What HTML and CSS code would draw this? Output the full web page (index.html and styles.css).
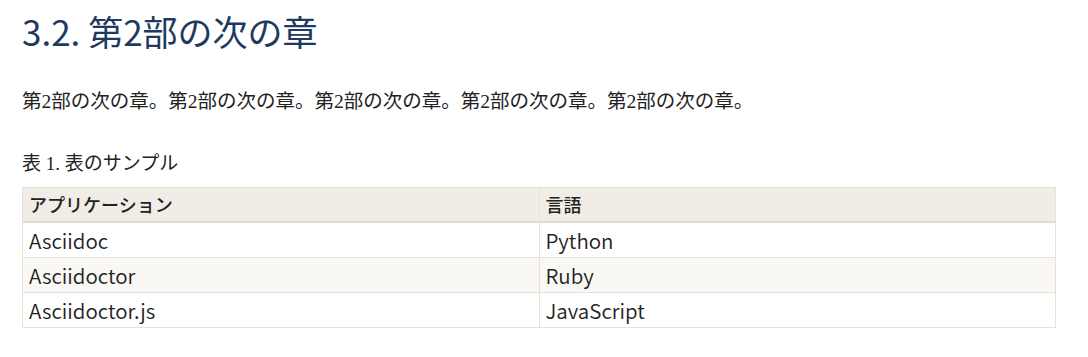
FILE: index.html
```html
<!DOCTYPE html>
<html lang="ja">
<head>
    <meta charset="UTF-8">
    <meta name="viewport" content="width=device-width, initial-scale=1.0">
    <title>第2部の次の章</title>
    <link rel="stylesheet" href="styles.css">
</head>
<body>

    <!-- Section 3.2 -->
    <div class="sect2">
        <h3 id="_chapter_next">3.2. 第2部の次の章</h3>
        <div class="paragraph">
            <p>第2部の次の章。第2部の次の章。第2部の次の章。第2部の次の章。第2部の次の章。</p>
        </div>

        <table class="tableblock">
            <caption class="title">表 1. 表のサンプル</caption>
            <colgroup>
                <col style="width: 50%;">
                <col style="width: 50%;">
            </colgroup>
            <thead>
                <tr>
                    <th>アプリケーション</th>
                    <th>言語</th>
                </tr>
            </thead>
            <tbody>
                <tr>
                    <td>Asciidoc</td>
                    <td>Python</td>
                </tr>
                <tr class="even">
                    <td>Asciidoctor</td>
                    <td>Ruby</td>
                </tr>
                <tr>
                    <td>Asciidoctor.js</td>
                    <td>JavaScript</td>
                </tr>
            </tbody>
        </table>
    </div>

</body>
</html>
```

FILE: styles.css
```css
/* Global Styles */
* {
    margin: 0;
    padding: 0;
    box-sizing: border-box;
}

body {
    font-family: 'Liberation Serif', 'Noto Sans CJK JP', serif;
    background-color: #fff;
    color: #222;
    padding: 0 32px 0 22px;
}

.sect2 h3 {
    font-family: 'Noto Sans CJK JP', sans-serif;
    font-weight: 400;
    font-size: 35px;
    line-height: 1.2;
    color: #1f3a60;
    padding-top: 10px;
    margin-bottom: 34px;
}

.paragraph p {
    font-size: 19.5px;
    line-height: 1.6;
    margin-bottom: 32px;
}

table.tableblock {
    width: 100%;
    border-collapse: collapse;
    border: 1px solid #e3dfd4;
    font-family: 'Noto Sans CJK JP', sans-serif;
    font-size: 20.5px;
    font-weight: 350;
    color: #222;
}

table.tableblock caption.title {
    text-align: left;
    font-family: 'Liberation Serif', 'Noto Sans CJK JP', serif;
    font-size: 19px;
    font-weight: 400;
    line-height: 1.6;
    padding-bottom: 7px;
}

table.tableblock th,
table.tableblock td {
    text-align: left;
    padding: 0 6px;
    height: 35px;
    border: 1px solid #e6e2d8;
}

table.tableblock thead th {
    background-color: #f1ede6;
    border-bottom: 2px solid #e0dcd0;
    font-size: 18px;
    font-weight: 500;
}

table.tableblock tr.even td {
    background-color: #f9f8f5;
}
```
